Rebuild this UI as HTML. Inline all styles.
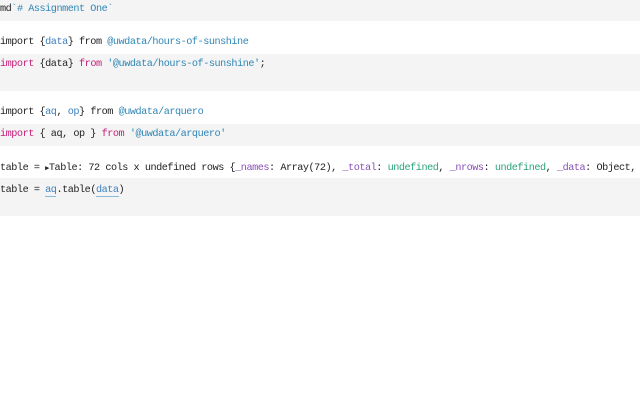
<!DOCTYPE html>
<html><head><style>
body{margin:0;width:640px;height:400px;background:#fff;overflow:hidden;font-family:"Liberation Mono",monospace;font-size:10.2px;letter-spacing:-0.47px;color:#222}
.g{position:absolute;left:0;width:640px;background:#f4f4f4}
.l{position:absolute;left:0;white-space:pre;line-height:12px}
.k{color:#c41e7a}.s{color:#2f86b5}.b{color:#3b7fbf}.p{color:#8a4fb8}.u{color:#2aa37a}
.ul{border-bottom:1px solid #8ab8d8}
</style></head><body>
<div class="g" style="top:0;height:21px"></div>
<div class="g" style="top:54px;height:37px"></div>
<div class="g" style="top:124px;height:22px"></div>
<div class="g" style="top:178px;height:38px"></div>
<div class="l" style="top:4px">md<span class="s">`# Assignment One`</span></div>
<div class="l" style="top:37px">import {<span class="b">data</span>} from <span class="s">@uwdata/hours-of-sunshine</span></div>
<div class="l" style="top:59px"><span class="k">import</span> {data} <span class="k">from</span> <span class="s">'@uwdata/hours-of-sunshine'</span>;</div>
<div class="l" style="top:107px">import {<span class="b">aq</span>, <span class="b">op</span>} from <span class="s">@uwdata/arquero</span></div>
<div class="l" style="top:129px"><span class="k">import</span> { aq, op } <span class="k">from</span> <span class="s">'@uwdata/arquero'</span></div>
<div class="l" style="top:163px">table = <span style="font-size:7px">▶</span>Table: 72 cols x undefined rows {<span class="p">_names</span>: Array(72), <span class="p">_total</span>: <span class="u">undefined</span>, <span class="p">_nrows</span>: <span class="u">undefined</span>, <span class="p">_data</span>: Object,</div>
<div class="l" style="top:185px">table = <span class="b ul">aq</span>.table(<span class="b ul">data</span>)</div>
</body></html>
